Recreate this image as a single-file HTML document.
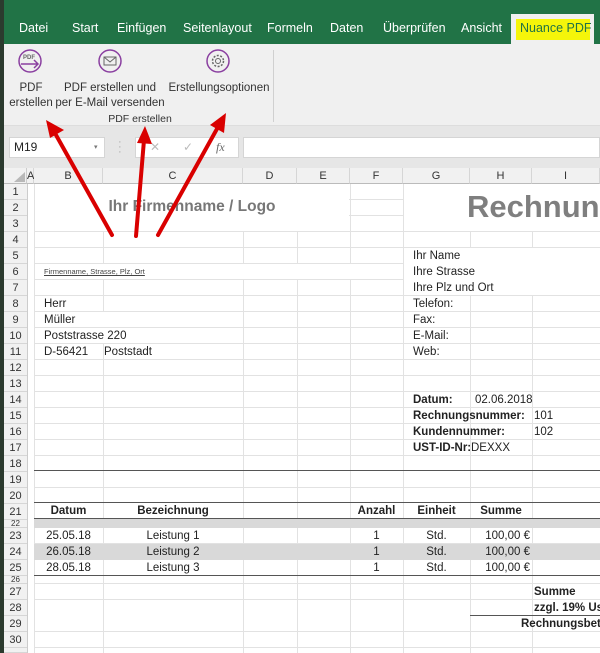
<!DOCTYPE html><html><head><meta charset="utf-8"><style>
body{margin:0;width:600px;height:653px;overflow:hidden;position:relative;background:#fff;font-family:"Liberation Sans",sans-serif;}
div{position:absolute;box-sizing:border-box}
.t{font-size:12.5px;color:#fff;top:21px}
.c{font-size:11.5px;color:#222;white-space:nowrap;line-height:16px}
.b{font-weight:bold}
.rl{font-size:11px;color:#333;width:23px;left:4px;text-align:center;background:#f1f1f1;border-bottom:1px solid #d6d6d6}
.ch{font-size:11px;color:#333;top:168px;height:16px;line-height:16px;text-align:center;background:#f1f1f1;border-right:1px solid #d6d6d6;border-bottom:1px solid #bbb}
.vl{top:184px;bottom:0;width:1px;background:#e2e2e2}
.hl{left:34px;right:0;height:1px;background:#e2e2e2}
.rb{font-size:11.5px;color:#333;text-align:center;line-height:15px}
</style></head><body>
<div style="left:0;top:0;width:600px;height:44px;background:#217346"></div>
<div style="left:0;top:0;width:4px;height:653px;background:#2b3a2e"></div>
<div class="t" style="left:19px">Datei</div>
<div class="t" style="left:72px">Start</div>
<div class="t" style="left:117px">Einfügen</div>
<div class="t" style="left:183px">Seitenlayout</div>
<div class="t" style="left:267px">Formeln</div>
<div class="t" style="left:330px">Daten</div>
<div class="t" style="left:383px">Überprüfen</div>
<div class="t" style="left:461px">Ansicht</div>
<div style="left:511px;top:14px;width:83px;height:31px;background:#f0f0f0"></div>
<div style="left:516px;top:19px;width:74px;height:21px;background:#f5f50a"></div>
<div class="t" style="left:520px;color:#217346">Nuance PDF</div>
<div style="left:4px;top:44px;width:596px;height:82px;background:#f0f0f0;border-bottom:1px solid #ddd"></div>
<div style="left:273px;top:50px;width:1px;height:72px;background:#d0d0d0"></div>
<svg style="position:absolute;left:0;top:44px" width="260" height="40">
<circle cx="30" cy="17" r="11" fill="none" stroke="#8a3fa0" stroke-width="1.5"/>
<text x="23" y="15" font-size="6" font-family="Liberation Sans" fill="#666" font-weight="bold">PDF</text>
<path d="M21 20 H38 M34 16 L38 20 L34 24" stroke="#8a3fa0" stroke-width="1.5" fill="none"/>
<circle cx="110" cy="17" r="11" fill="none" stroke="#8a3fa0" stroke-width="1.5"/>
<rect x="104" y="13" width="12" height="8" fill="none" stroke="#666"/><path d="M104 13 L110 18 L116 13" stroke="#666" fill="none"/>
<circle cx="218" cy="17" r="11" fill="none" stroke="#8a3fa0" stroke-width="1.5"/>
<circle cx="218" cy="17" r="5.5" fill="none" stroke="#666" stroke-width="1.5" stroke-dasharray="2 1.5"/><circle cx="218" cy="17" r="2.5" fill="none" stroke="#666"/>
</svg>
<div class="rb" style="left:6px;top:81px;width:50px">PDF<br>erstellen</div>
<div class="rb" style="left:55px;top:81px;width:110px">PDF erstellen und<br>per E-Mail versenden</div>
<div class="rb" style="left:165px;top:81px;width:108px">Erstellungsoptionen</div>
<div class="rb" style="left:95px;top:112px;width:90px;font-size:10.5px">PDF erstellen</div>
<div style="left:4px;top:126px;width:596px;height:42px;background:#e6e6e6"></div>
<div style="left:9px;top:137px;width:96px;height:21px;background:#fff;border:1px solid #d5d5d5;font-size:12px;line-height:19px;padding-left:4px;color:#222">M19<span style="position:absolute;left:84px;font-size:7px;color:#777">▾</span></div>
<div style="left:118px;top:140px;font-size:11px;color:#aaa;line-height:5px">·<br>·<br>·</div>
<div style="left:135px;top:137px;width:104px;height:21px;background:#fff;border:1px solid #d5d5d5;font-size:12px;line-height:19px;color:#bbb"><span style="position:absolute;left:14px">✕</span><span style="position:absolute;left:47px">✓</span><span style="position:absolute;left:80px;color:#666;font-family:'Liberation Serif';font-style:italic">fx</span></div>
<div style="left:243px;top:137px;width:357px;height:21px;background:#fff;border:1px solid #d5d5d5"></div>
<div style="left:4px;top:168px;width:23px;height:16px;background:#f1f1f1;border-right:1px solid #ccc;border-bottom:1px solid #bbb"></div>
<svg style="position:absolute;left:12px;top:172px" width="14" height="11"><path d="M13 0 V10 H2 Z" fill="#b8b8b8"/></svg>
<div class="ch" style="left:27px;width:7px">A</div>
<div class="ch" style="left:34px;width:69px">B</div>
<div class="ch" style="left:103px;width:140px">C</div>
<div class="ch" style="left:243px;width:54px">D</div>
<div class="ch" style="left:297px;width:53px">E</div>
<div class="ch" style="left:350px;width:53px">F</div>
<div class="ch" style="left:403px;width:67px">G</div>
<div class="ch" style="left:470px;width:62px">H</div>
<div class="ch" style="left:532px;width:68px">I</div>
<div style="left:27px;top:184px;width:7px;height:469px;background:#fff;border-left:1px solid #ccc"></div>
<div class="vl" style="left:34px"></div><div class="vl" style="left:103px"></div><div class="vl" style="left:243px"></div><div class="vl" style="left:297px"></div><div class="vl" style="left:350px"></div><div class="vl" style="left:403px"></div><div class="vl" style="left:470px"></div><div class="vl" style="left:532px"></div>
<div class="hl" style="top:199px"></div><div class="hl" style="top:215px"></div><div class="hl" style="top:231px"></div><div class="hl" style="top:247px"></div><div class="hl" style="top:263px"></div><div class="hl" style="top:279px"></div><div class="hl" style="top:295px"></div><div class="hl" style="top:311px"></div><div class="hl" style="top:327px"></div><div class="hl" style="top:343px"></div><div class="hl" style="top:359px"></div><div class="hl" style="top:375px"></div><div class="hl" style="top:391px"></div><div class="hl" style="top:407px"></div><div class="hl" style="top:423px"></div><div class="hl" style="top:439px"></div><div class="hl" style="top:455px"></div><div class="hl" style="top:487px"></div><div class="hl" style="top:543px"></div><div class="hl" style="top:583px"></div><div class="hl" style="top:599px"></div><div class="hl" style="top:631px"></div><div class="hl" style="top:647px"></div>
<div style="left:35px;top:184px;width:314px;height:47px;background:#fff"></div>
<div style="left:404px;top:184px;width:196px;height:47px;background:#fff"></div>
<div style="left:35px;top:264px;width:368px;height:15px;background:#fff"></div>
<div style="left:404px;top:248px;width:196px;height:47px;background:#fff"></div>
<div style="left:35px;top:312px;width:208px;height:15px;background:#fff"></div>
<div style="left:35px;top:328px;width:208px;height:15px;background:#fff"></div>
<div style="left:34px;top:519px;width:566px;height:9px;background:#d9d9d9"></div>
<div style="left:34px;top:544px;width:566px;height:16px;background:#d9d9d9"></div>
<div style="left:34px;top:470px;width:566px;height:1px;background:#555"></div>
<div style="left:34px;top:502px;width:566px;height:1px;background:#555"></div>
<div style="left:34px;top:518px;width:566px;height:1px;background:#555"></div>
<div style="left:34px;top:575px;width:566px;height:1px;background:#555"></div>
<div style="left:470px;top:615px;width:130px;height:1px;background:#555"></div>
<div class="rl" style="top:184px;height:16px;line-height:16px">1</div><div class="rl" style="top:200px;height:16px;line-height:16px">2</div><div class="rl" style="top:216px;height:16px;line-height:16px">3</div><div class="rl" style="top:232px;height:16px;line-height:16px">4</div><div class="rl" style="top:248px;height:16px;line-height:16px">5</div><div class="rl" style="top:264px;height:16px;line-height:16px">6</div><div class="rl" style="top:280px;height:16px;line-height:16px">7</div><div class="rl" style="top:296px;height:16px;line-height:16px">8</div><div class="rl" style="top:312px;height:16px;line-height:16px">9</div><div class="rl" style="top:328px;height:16px;line-height:16px">10</div><div class="rl" style="top:344px;height:16px;line-height:16px">11</div><div class="rl" style="top:360px;height:16px;line-height:16px">12</div><div class="rl" style="top:376px;height:16px;line-height:16px">13</div><div class="rl" style="top:392px;height:16px;line-height:16px">14</div><div class="rl" style="top:408px;height:16px;line-height:16px">15</div><div class="rl" style="top:424px;height:16px;line-height:16px">16</div><div class="rl" style="top:440px;height:16px;line-height:16px">17</div><div class="rl" style="top:456px;height:16px;line-height:16px">18</div><div class="rl" style="top:472px;height:16px;line-height:16px">19</div><div class="rl" style="top:488px;height:16px;line-height:16px">20</div><div class="rl" style="top:504px;height:16px;line-height:16px">21</div><div class="rl" style="top:520px;height:8px;line-height:8px;overflow:hidden;font-size:8px">22</div><div class="rl" style="top:528px;height:16px;line-height:16px">23</div><div class="rl" style="top:544px;height:16px;line-height:16px">24</div><div class="rl" style="top:560px;height:16px;line-height:16px">25</div><div class="rl" style="top:576px;height:8px;line-height:8px;overflow:hidden;font-size:8px">26</div><div class="rl" style="top:584px;height:16px;line-height:16px">27</div><div class="rl" style="top:600px;height:16px;line-height:16px">28</div><div class="rl" style="top:616px;height:16px;line-height:16px">29</div><div class="rl" style="top:632px;height:16px;line-height:16px">30</div><div class="rl" style="top:648px;height:5px"></div>
<div class="c b" style="left:35px;width:314px;top:199px;text-align:center;font-size:15.5px;color:#777">Ihr Firmenname / Logo</div>
<div class="c b" style="left:467px;top:190px;font-size:31px;line-height:34px;color:#7f7f7f">Rechnung</div>
<div class="c" style="left:44px;top:264px;font-size:7.5px;text-decoration:underline;color:#444">Firmenname, Strasse, Plz, Ort</div>
<div class="c" style="left:44px;top:296px">Herr</div>
<div class="c" style="left:44px;top:312px">Müller</div>
<div class="c" style="left:44px;top:328px">Poststrasse 220</div>
<div class="c" style="left:44px;top:344px">D-56421</div><div class="c" style="left:104px;top:344px">Poststadt</div>
<div class="c" style="left:413px;top:248px">Ihr Name</div>
<div class="c" style="left:413px;top:264px">Ihre Strasse</div>
<div class="c" style="left:413px;top:280px">Ihre Plz und Ort</div>
<div class="c" style="left:413px;top:296px">Telefon:</div>
<div class="c" style="left:413px;top:312px">Fax:</div>
<div class="c" style="left:413px;top:328px">E-Mail:</div>
<div class="c" style="left:413px;top:344px">Web:</div>
<div class="c b" style="left:413px;top:392px">Datum:</div><div class="c" style="left:475px;top:392px">02.06.2018</div>
<div class="c b" style="left:413px;top:408px">Rechnungsnummer:</div><div class="c" style="left:534px;top:408px">101</div>
<div class="c b" style="left:413px;top:424px">Kundennummer:</div><div class="c" style="left:534px;top:424px">102</div>
<div class="c b" style="left:413px;top:440px">UST-ID-Nr:</div><div class="c" style="left:471px;top:440px">DEXXX</div>
<div class="c b" style="left:34px;width:69px;top:503px;text-align:center">Datum</div>
<div class="c b" style="left:103px;width:140px;top:503px;text-align:center">Bezeichnung</div>
<div class="c b" style="left:350px;width:53px;top:503px;text-align:center">Anzahl</div>
<div class="c b" style="left:403px;width:67px;top:503px;text-align:center">Einheit</div>
<div class="c b" style="left:470px;width:62px;top:503px;text-align:center">Summe</div>
<div class="c" style="left:34px;width:69px;top:528px;text-align:center">25.05.18</div><div class="c" style="left:103px;width:140px;top:528px;text-align:center">Leistung 1</div><div class="c" style="left:350px;width:53px;top:528px;text-align:center">1</div><div class="c" style="left:403px;width:67px;top:528px;text-align:center">Std.</div><div class="c" style="left:470px;width:60px;top:528px;text-align:right">100,00 €</div>
<div class="c" style="left:34px;width:69px;top:544px;text-align:center">26.05.18</div><div class="c" style="left:103px;width:140px;top:544px;text-align:center">Leistung 2</div><div class="c" style="left:350px;width:53px;top:544px;text-align:center">1</div><div class="c" style="left:403px;width:67px;top:544px;text-align:center">Std.</div><div class="c" style="left:470px;width:60px;top:544px;text-align:right">100,00 €</div>
<div class="c" style="left:34px;width:69px;top:560px;text-align:center">28.05.18</div><div class="c" style="left:103px;width:140px;top:560px;text-align:center">Leistung 3</div><div class="c" style="left:350px;width:53px;top:560px;text-align:center">1</div><div class="c" style="left:403px;width:67px;top:560px;text-align:center">Std.</div><div class="c" style="left:470px;width:60px;top:560px;text-align:right">100,00 €</div>
<div class="c b" style="left:534px;top:584px">Summe</div>
<div class="c b" style="left:534px;top:600px">zzgl. 19% UsT</div>
<div class="c b" style="left:521px;top:616px">Rechnungsbetrag</div>
<svg style="position:absolute;left:0;top:0" width="600" height="653">
<g stroke="#d90000" stroke-width="4" stroke-linecap="round">
<line x1="112" y1="235" x2="56" y2="135"/>
<line x1="136" y1="236" x2="144" y2="140"/>
<line x1="158" y1="235" x2="218" y2="127"/>
</g>
<g fill="#d90000">
<path d="M46 120 L64 130 L50 138 Z"/>
<path d="M145 126 L152 144 L137 143 Z"/>
<path d="M226 113 L224 133 L210 125 Z"/>
</g>
</svg>
</body></html>
